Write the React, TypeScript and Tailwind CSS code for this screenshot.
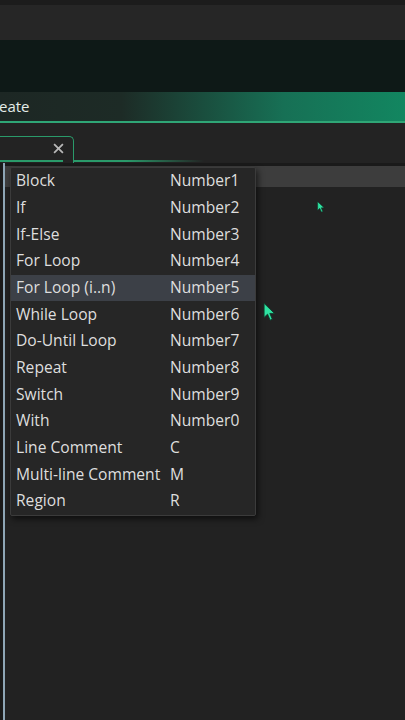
import React from 'react'

const items: [string, string][] = [
  ['Block', 'Number1'],
  ['If', 'Number2'],
  ['If-Else', 'Number3'],
  ['For Loop', 'Number4'],
  ['For Loop (i..n)', 'Number5'],
  ['While Loop', 'Number6'],
  ['Do-Until Loop', 'Number7'],
  ['Repeat', 'Number8'],
  ['Switch', 'Number9'],
  ['With', 'Number0'],
  ['Line Comment', 'C'],
  ['Multi-line Comment', 'M'],
  ['Region', 'R'],
]

const Cursor = ({ className }: { className: string }) => (
  <svg className={className} viewBox="0 0 12 18" fill="none">
    <path d="M1 1 L1 14 L4.2 11 L6.6 16.5 L8.6 15.6 L6.3 10.3 L10.6 10.3 Z" fill="#2fe3a2" stroke="#0d3a2a" strokeWidth="0.8" strokeLinejoin="round" />
  </svg>
)

const App = () => {
  return (
    <div className="relative w-[405px] h-[720px] overflow-hidden bg-[#222222] flex flex-col font-['Open_Sans',sans-serif]">
      <div className="h-[5px] bg-[#1c1c1c]" />
      <div className="h-[35px] bg-[#262626]" />
      <div className="h-[52px] bg-[#0e1917]" />

      <div className="h-[29px] flex items-center bg-[linear-gradient(90deg,#1d2724_0%,#1d2b26_30%,#177055_70%,#128660_100%)]">
        <span className="text-[15px] text-[#e4ece8] -ml-[1px] -mt-[1px]">eate</span>
      </div>
      <div className="h-[2px] bg-[#2fa676]" />

      <div className="h-[40px] bg-[#232323] flex items-end">
        <div className="relative w-[74px] h-[27px] border-t-[1.5px] border-r-[1.5px] border-[#2a9a6a] rounded-tr-[5px] flex items-center justify-end pr-[9px] pb-[3px]">
          <svg className="w-[11px] h-[11px]" viewBox="0 0 10 10" stroke="#b8b8b8" strokeWidth="1.6">
            <path d="M1 1 L9 9 M9 1 L1 9" />
          </svg>
          <div className="absolute left-0 bottom-[1px] w-[63px] h-[2px] bg-[#2a9a6a]" />
        </div>
        <div className="w-[130px] h-[2px] mb-[1px] bg-[linear-gradient(90deg,#2a9a6a,#2a9a6a_40%,transparent)]" />
      </div>

      <div className="flex-1 flex bg-[#222222]">
        <div className="w-[3px] bg-[#1a1a1a]" />
        <div className="w-[2px] bg-[#8ea6b6]" />
        <div className="flex-1 flex flex-col">
          <div className="h-[3px] bg-[#1a1a1a]" />
          <div className="h-[21px] bg-[#3d3d3d]" />
          <div className="flex-1 bg-[#222222]" />
        </div>
      </div>

      <div className="absolute left-[10px] top-[167px] w-[246px] bg-[#262626] border border-[#3b3b3b] rounded-[2px] shadow-[2px_3px_6px_rgba(0,0,0,0.6)]">
        {items.map(([label, key]) => (
          <div
            key={label}
            className={`h-[26.7px] flex items-center text-[15.6px] text-[#dedede] ${label === 'For Loop (i..n)' ? 'bg-[#3c4047]' : ''}`}
          >
            <span className="w-[159px] pl-[5px] whitespace-nowrap -mt-[1px]">{label}</span>
            <span className="-mt-[1px]">{key}</span>
          </div>
        ))}
      </div>

      <Cursor className="absolute left-[317px] top-[201px] w-[8px] h-[12px]" />
      <Cursor className="absolute left-[263px] top-[302px] w-[13px] h-[20px]" />
    </div>
  )
}

export default App
